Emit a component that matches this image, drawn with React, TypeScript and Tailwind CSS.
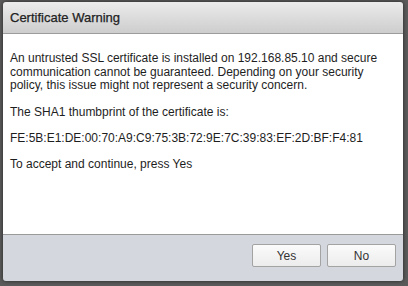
import React from "react";

export default function App() {
  return (
    <div className="w-[408px] h-[286px] bg-[#5b5b5b] relative overflow-hidden" style={{ fontFamily: '"Liberation Sans", Arial, sans-serif' }}>
      <div className="absolute left-[3px] top-[2px] w-[400px] h-[279px] flex flex-col rounded-[3px] overflow-hidden shadow-[0_0_4px_rgba(0,0,0,0.6)]">
        <div className="h-[32px] shrink-0 bg-gradient-to-b from-[#ececec] to-[#cdcdcd] border-b border-[#9c9c9c] flex items-center px-[7px]">
          <span className="text-[13px] text-[#222] font-normal [-webkit-text-stroke:0.25px_#222]">Certificate Warning</span>
        </div>
        <div className="flex-1 bg-white px-[7px] pt-[18px] text-[12px] leading-[13.5px] text-[#1e1e1e]">
          <p>
            An untrusted SSL certificate is installed on 192.168.85.10 and secure
            <br />
            communication cannot be guaranteed. Depending on your security
            <br />
            policy, this issue might not represent a security concern.
          </p>
          <p className="mt-[13px]">The SHA1 thumbprint of the certificate is:</p>
          <p className="mt-[13px]">FE:5B:E1:DE:00:70:A9:C9:75:3B:72:9E:7C:39:83:EF:2D:BF:F4:81</p>
          <p className="mt-[12px]">To accept and continue, press Yes</p>
        </div>
        <div className="h-[47px] shrink-0 bg-[#d4d8de] border-t border-[#9a9a9a] flex justify-end items-start pt-[9px] pr-[7px] gap-[6px]">
          <button className="w-[69px] h-[23px] rounded-[2px] border border-[#a3a3a3] bg-gradient-to-b from-[#fbfbfb] to-[#ececec] text-[12px] text-[#333]">Yes</button>
          <button className="w-[69px] h-[23px] rounded-[2px] border border-[#a3a3a3] bg-gradient-to-b from-[#fbfbfb] to-[#ececec] text-[12px] text-[#333]">No</button>
        </div>
      </div>
    </div>
  );
}
